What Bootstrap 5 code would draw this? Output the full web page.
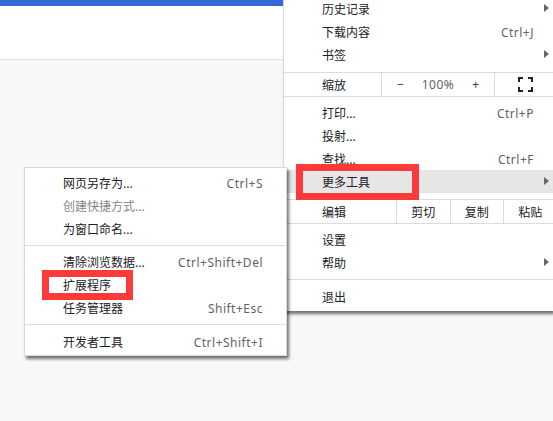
<!DOCTYPE html>
<html lang="zh">
<head>
<meta charset="utf-8">
<title>更多工具</title>
<link href="https://cdn.jsdelivr.net/npm/bootstrap@5.3.0/dist/css/bootstrap.min.css" rel="stylesheet">
<style>
html,body{height:100%;margin:0}
body{background:#f7f8fa;overflow:hidden;position:relative;font-family:"Noto Sans","Noto Sans CJK SC",sans-serif;font-size:12px;color:#202124}
.hdr{height:60px;background:#fff;border-bottom:1px solid #dcdde0}
.hdr-bar{height:6px;background:#3369d6}
.cm{position:absolute;background:#fff;box-shadow:2px 3px 3px rgba(0,0,0,.55)}
.cm-main{left:283px;top:-3px;width:270px;height:314px;border-left:1px solid #d8d8dc}
.cm-sub{left:24px;top:167px;width:263px;height:189px;border:1px solid #d8d8e0;padding-top:3px}
.mi{height:23px;padding-left:38px;padding-right:19px;line-height:25px;white-space:nowrap}
.cm-sub .mi{padding-left:38px;padding-right:23px}
.mi.on{background:#e6e6e6}
.mi.off{color:#80868b}
.sc{color:#5f6368;letter-spacing:.5px}
.arr{width:0;height:0;border-left:5px solid #666;border-top:4px solid transparent;border-bottom:4px solid transparent;position:absolute;right:4px;margin-top:7px}
.rule{height:1px;background:#dcdcdf}
.gap4{height:4px}.gap5{height:5px}.gap6{height:6px}
.hasarr{position:relative}
.zr{height:23px;line-height:25px}
.zr .lbl{padding-left:38px}
.z-lbl{width:97px}
.z-mid{width:114px;border-left:1px solid #dcdcdf;border-right:1px solid #dcdcdf;height:23px;color:#3c4043;padding:0 6px}
.z-end{flex:1;padding-right:20px}
.e-lbl{width:112px;flex:none}
.e-c{border-left:1px solid #dcdcdf;height:23px;width:53.5px;text-align:center;flex:none}
.redbox{position:absolute;border:7px solid #fc3a3a;z-index:5}
.rb1{left:296px;top:164px;width:123px;height:36px}
.rb2{left:42px;top:270px;width:91px;height:30px}
</style>
</head>
<body>
<div class="hdr"><div class="hdr-bar"></div></div>

<div class="cm cm-main">
  <div class="mi hasarr d-flex justify-content-between"><span>历史记录</span><i class="arr"></i></div>
  <div class="mi d-flex justify-content-between"><span>下载内容</span><span class="sc">Ctrl+J</span></div>
  <div class="mi hasarr d-flex justify-content-between"><span>书签</span><i class="arr"></i></div>
  <div class="gap6"></div><div class="rule"></div>
  <div class="zr d-flex">
    <div class="lbl z-lbl">缩放</div>
    <div class="z-mid d-flex justify-content-around align-items-center"><span>−</span><span class="sc">100%</span><span>+</span></div>
    <div class="z-end d-flex align-items-center justify-content-end">
      <svg width="15" height="15" viewBox="0 0 15 15" fill="none" stroke="#202124" stroke-width="2"><path d="M1 5V1H5M10 1H14V5M14 10V14H10M5 14H1V10"/></svg>
    </div>
  </div>
  <div class="rule"></div><div class="gap4"></div>
  <div class="mi d-flex justify-content-between"><span>打印...</span><span class="sc">Ctrl+P</span></div>
  <div class="mi"><span>投射...</span></div>
  <div class="mi d-flex justify-content-between"><span>查找...</span><span class="sc">Ctrl+F</span></div>
  <div class="mi on hasarr d-flex justify-content-between"><span>更多工具</span><i class="arr"></i></div>
  <div class="gap6"></div><div class="rule"></div>
  <div class="zr d-flex">
    <div class="lbl e-lbl">编辑</div>
    <div class="e-c">剪切</div><div class="e-c">复制</div><div class="e-c">粘贴</div>
  </div>
  <div class="rule"></div><div class="gap4"></div>
  <div class="mi"><span>设置</span></div>
  <div class="mi hasarr d-flex justify-content-between"><span>帮助</span><i class="arr"></i></div>
  <div class="gap5"></div><div class="rule"></div><div class="gap5"></div>
  <div class="mi"><span>退出</span></div>
</div>

<div class="cm cm-sub">
  <div class="mi d-flex justify-content-between"><span>网页另存为...</span><span class="sc">Ctrl+S</span></div>
  <div class="mi off"><span>创建快捷方式...</span></div>
  <div class="mi"><span>为窗口命名...</span></div>
  <div class="gap5"></div><div class="rule"></div><div class="gap4"></div>
  <div class="mi d-flex justify-content-between"><span>清除浏览数据...</span><span class="sc">Ctrl+Shift+Del</span></div>
  <div class="mi"><span>扩展程序</span></div>
  <div class="mi d-flex justify-content-between"><span>任务管理器</span><span class="sc">Shift+Esc</span></div>
  <div class="gap5"></div><div class="rule"></div><div class="gap5"></div>
  <div class="mi d-flex justify-content-between"><span>开发者工具</span><span class="sc">Ctrl+Shift+I</span></div>
</div>

<div class="redbox rb1"></div>
<div class="redbox rb2"></div>
<script src="https://cdn.jsdelivr.net/npm/bootstrap@5.3.0/dist/js/bootstrap.bundle.min.js"></script>
</body>
</html>
